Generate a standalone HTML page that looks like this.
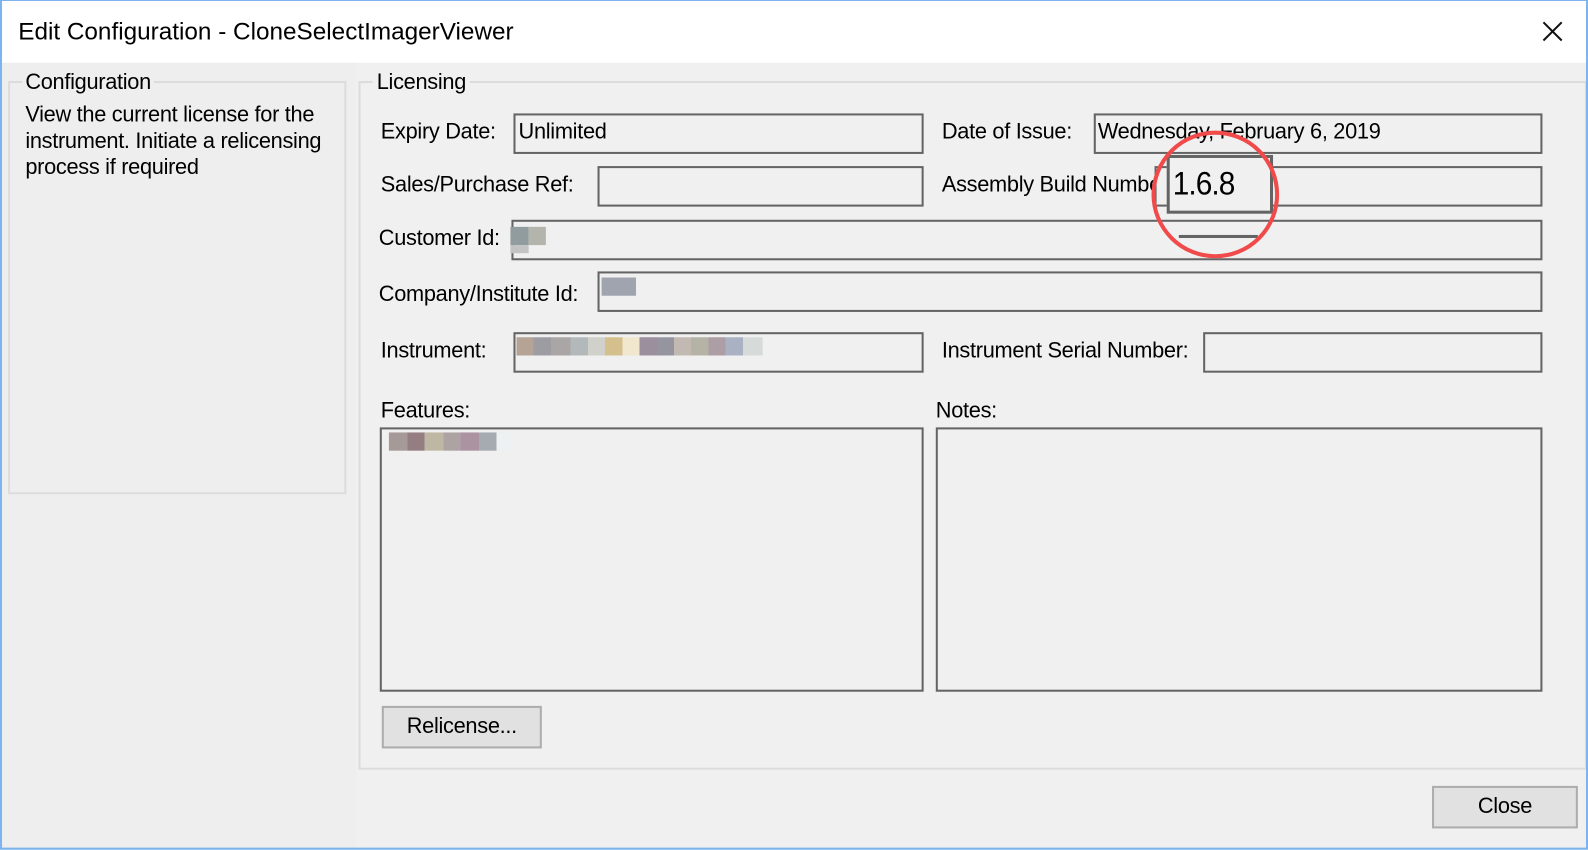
<!DOCTYPE html>
<html><head><meta charset="utf-8"><style>
*{margin:0;padding:0;box-sizing:border-box}
body{width:1588px;height:850px;position:relative;overflow:hidden;background:#f0f0f0;font-family:"Liberation Sans",sans-serif;font-size:21.5px;color:#000;letter-spacing:-0.3px}
#s{position:absolute;left:0;top:0;width:1568px;height:839px;transform:scale(1.01276);transform-origin:0 0}
.win{position:absolute;left:0;top:0;width:1568px;height:839px;border:2px solid #7db4ee;border-top-width:1px}
.title{position:absolute;left:0;top:0;width:1568px;height:62px;background:#fff}
.t{position:absolute;white-space:nowrap;line-height:24px}
.gb{position:absolute;border:2px solid #dcdcdc}
.f{position:absolute;border:2px solid #646464;background:#f0f0f0}
.btn{position:absolute;border:2px solid #adadad;background:#e1e1e1;text-align:center;line-height:36px}
.px{position:absolute;height:18px}
</style></head><body><div id="s">
<div class="title"></div>
<div class="t" style="left:18px;top:20px;font-size:24px;letter-spacing:0">Edit Configuration - CloneSelectImagerViewer</div>
<svg style="position:absolute;left:1522px;top:20px" width="22" height="22"><path d="M2 2L20 20M20 2L2 20" stroke="#111" stroke-width="2"/></svg>
<div style="position:absolute;left:2px;top:62px;width:350px;height:776px;background:#eeeeee"></div>
<div class="gb" style="left:8px;top:80px;width:334px;height:408px"></div>
<div class="t" style="left:22px;top:69px;background:#eeeeee;padding:0 3px">Configuration</div>
<div class="t" style="left:25px;top:100px;line-height:26px">View the current license for the<br>instrument. Initiate a relicensing<br>process if required</div>

<div class="gb" style="left:354px;top:80px;width:1213px;height:680px"></div>
<div class="t" style="left:368px;top:69px;background:#f0f0f0;padding:0 4px">Licensing</div>

<div class="t" style="left:376px;top:118px">Expiry Date:</div>
<div class="f" style="left:507px;top:112px;width:405px;height:40px"></div>
<div class="t" style="left:512px;top:118px">Unlimited</div>
<div class="t" style="left:930px;top:118px">Date of Issue:</div>
<div class="f" style="left:1080px;top:112px;width:443px;height:40px"></div>
<div class="t" style="left:1084px;top:118px">Wednesday, February 6, 2019</div>

<div class="t" style="left:376px;top:170px">Sales/Purchase Ref:</div>
<div class="f" style="left:590px;top:164px;width:322px;height:40px"></div>
<div class="t" style="left:930px;top:170px">Assembly Build Number:</div>
<div class="f" style="left:1140px;top:164px;width:383px;height:40px"></div>

<div class="t" style="left:374px;top:223px">Customer Id:</div>
<div class="f" style="left:505px;top:217px;width:1018px;height:40px"></div>
<div class="px" style="left:504px;top:224px;width:18px;background:#909c9d"></div>
<div class="px" style="left:522px;top:224px;width:17px;background:#b3b5ad"></div>
<div class="px" style="left:504px;top:242px;width:18px;height:8px;background:#c3c3c3"></div>

<div class="t" style="left:374px;top:278px">Company/Institute Id:</div>
<div class="f" style="left:590px;top:268px;width:933px;height:40px"></div>
<div class="px" style="left:594px;top:274px;width:34px;background:#a0a4ae"></div>

<div class="t" style="left:376px;top:334px">Instrument:</div>
<div class="f" style="left:507px;top:328px;width:405px;height:40px"></div>
<div style="position:absolute;left:510px;top:333px;height:18px;width:243px;background:linear-gradient(90deg,#b5a396 0 7%,#9c9ca2 7% 14%,#aaa6a6 14% 22%,#b3b9bb 22% 29%,#d0d1cb 29% 36%,#d5c08d 36% 43%,#f1e6ce 43% 50%,#9b8e9d 50% 57%,#9595a0 57% 64%,#c3b9b3 64% 71%,#b5b3a5 71% 78%,#ad9da5 78% 85%,#a9b1c3 85% 92%,#d6dad8 92%)"></div>
<div class="t" style="left:930px;top:334px">Instrument Serial Number:</div>
<div class="f" style="left:1188px;top:328px;width:335px;height:40px"></div>

<div class="t" style="left:376px;top:393px">Features:</div>
<div class="f" style="left:375px;top:422px;width:537px;height:261px"></div>
<div style="position:absolute;left:384px;top:427px;height:18px;width:122px;background:linear-gradient(90deg,#a69a98 0 15%,#957e82 15% 29%,#bdb7a3 29% 44%,#aea3a3 44% 58%,#ab93a2 58% 73%,#a5abb0 73% 87%,#edf1f1 87%)"></div>
<div class="t" style="left:924px;top:393px">Notes:</div>
<div class="f" style="left:924px;top:422px;width:599px;height:261px"></div>

<div class="btn" style="left:377px;top:697px;width:158px;height:42px">Relicense...</div>
<div class="btn" style="left:1414px;top:776px;width:144px;height:42px">Close</div>

<div style="position:absolute;left:1152px;top:153px;width:105px;height:58px;border:3px solid #646464;background:#f0f0f0"></div>
<div class="t" style="left:1158px;top:162px;font-size:32px;line-height:38px;letter-spacing:-1px;transform:scaleX(0.92);transform-origin:0 0">1.6.8</div>
<div style="position:absolute;left:1164px;top:232px;width:78px;border-top:3px solid #646464"></div>
<svg style="position:absolute;left:1134px;top:126px" width="132" height="132"><circle cx="66" cy="66" r="61" fill="none" stroke="#f04a4a" stroke-width="4"/></svg>
<div class="win"></div>
</div></body></html>
